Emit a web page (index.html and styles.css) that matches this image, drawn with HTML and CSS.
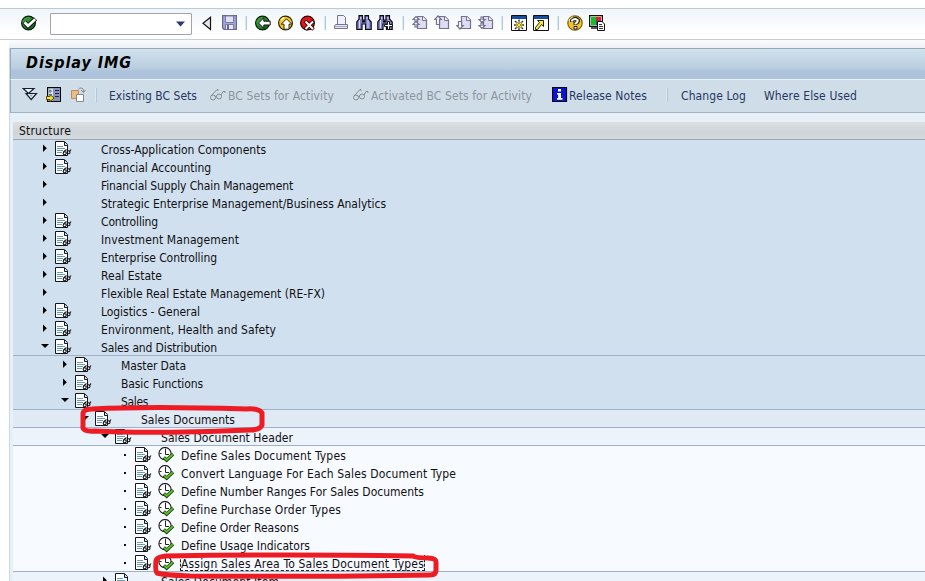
FILE: index.html
```html
<!DOCTYPE html>
<html lang="en">
<head>
<meta charset="utf-8">
<title>Display IMG</title>
<link rel="stylesheet" href="styles.css">
</head>
<body>
<svg class="defs" aria-hidden="true">
  <defs>
    <linearGradient id="gg" x2="1" y2="1"><stop offset="0" stop-color="#49b34a"/><stop offset="1" stop-color="#075b0b"/></linearGradient>
    <g id="glass" fill="none" stroke="#111" stroke-width="1.1"><circle cx="9.7" cy="12.2" r="1.5"/><circle cx="13.5" cy="11.2" r="1.5"/><path d="M8.5 11L11.5 8.5M14.5 10.5L16 8.5"/></g>
    <symbol id="doc" viewBox="0 0 17 16"><path d="M.5.5H9.5L12.5 3.5V14.5H.5Z" fill="#fff" stroke="#101820"/><path d="M9.5 1V4.5H12.5" fill="#cde" stroke="#101820"/><path d="M2 5.5H8M2 7.5H10M2 9.5H8M2 11.5H7" stroke="#6a9cb8"/><path d="M8 12H12" stroke="#fff" stroke-width="3"/><use href="#glass"/></symbol>
    <symbol id="clock" viewBox="0 0 17 16"><circle cx="7" cy="6.6" r="6.1" fill="#fff" stroke="#15151c" stroke-width="1.1"/><path d="M7.5 1.5V7.5H11M1.5 6.5H3.5" fill="none" stroke="#222"/><path d="M5.8 10.5L8.7 13.2L15 7" fill="none" stroke="#15350c" stroke-width="3.4"/><path d="M6.2 10.7L8.7 13L14.7 7.3" fill="none" stroke="#58bd29" stroke-width="2"/></symbol>
    <symbol id="spec" viewBox="0 0 17 14"><g fill="none" stroke="#858b91"><circle cx="4" cy="9.5" r="2.5"/><circle cx="10" cy="8.5" r="2.5"/><path d="M2 8L8 1.5H9V3M12 7L14 3.5H16V5M6 9L8 8"/></g></symbol>
    <symbol id="pg" viewBox="0 0 16 16"><path d="M5.5 1.5H11L14.5 5V13.5H5.5Z" fill="#dcdcf3" stroke="#72728e" stroke-width="1.2"/><path d="M10.5 1.5V5.5H14.5" fill="#fff" stroke="#72728e"/></symbol>
    <symbol id="bino" viewBox="0 0 16 16"><path d="M3 .7H6.5V5H9V.7H12.5V4L15.2 7V14.5H9.5V9H6V14.5H.8V7L3 4Z" fill="#8585c5" stroke="#0a0a1b" stroke-width="1.2"/><path d="M3.5 5V13M12 5V13M4.7 2V4M11 2V4" stroke="#d9d9f6"/><path d="M6 6.5H9.5" stroke="#0a0a1b" stroke-width="2"/></symbol>
    <symbol id="open" viewBox="0 0 12 12"><path d="M0 3H8L4 7Z" fill="#000"/></symbol>
    <symbol id="closed" viewBox="0 0 12 12"><path d="M2 1.5V9L5.8 5.2Z" fill="#000"/></symbol>
    <symbol id="dot" viewBox="0 0 12 12"><rect x="3" y="5" width="2" height="2" fill="#111"/></symbol>
  </defs>
</svg>

<header class="system">
  <svg class="ic" viewBox="0 0 16 16"><circle cx="7.5" cy="8" r="6.9" fill="url(#gg)" stroke="#081908" stroke-width="1.2"/><path d="M3.2 7L7 11L14.5 3.8" fill="none" stroke="#111" stroke-width="4.6"/><path d="M3.5 7.2L7 10.8L14.2 4.2" fill="none" stroke="#fff" stroke-width="2.7"/></svg>
  <div class="combo"><svg viewBox="0 0 9 6"><path d="M0 .5H9L4.5 5.5Z" fill="#2c3b69"/></svg></div>
  <svg class="ic" viewBox="0 0 16 16"><path d="M10.5 2.3V14.5L3 8.3Z" fill="#e4e6e8" stroke="#111" stroke-width="1.2"/></svg>
  <svg class="ic" viewBox="0 0 16 16"><path d="M.6.6H14.4V14.4H2L.6 13Z" fill="#a5a5d6" stroke="#686891" stroke-width="1.2"/><path d="M3.5 1H11.5V7.5H3.5Z" fill="#e0e0f4" stroke="#7a7aa5"/><path d="M3.5 14V9.5H11.5V14" fill="#e8e8fa" stroke="#7a7aa5"/><path d="M6 10V14" stroke="#686891" stroke-width="2"/></svg>
  <i class="sep"></i>
  <svg class="ic" viewBox="0 0 16 16"><circle cx="7.5" cy="8" r="6.9" fill="url(#gg)" stroke="#081908" stroke-width="1.2"/><path d="M3.5 8L8.8 2.8V6.2H15.2V10H8.8V13.3Z" fill="#fff" stroke="#111" stroke-width="1"/></svg>
  <svg class="ic" viewBox="0 0 16 16"><circle cx="7.5" cy="8" r="6.9" fill="#f5c51d" stroke="#2a230a" stroke-width="1.2"/><path d="M3 5L6 2.5" stroke="#fff3a0" stroke-width="2"/><path d="M8.5 3.8L13.8 9.2H11V14.2H6V9.2H3.2Z" fill="#fff" stroke="#30280b" stroke-width="1"/></svg>
  <svg class="ic" viewBox="0 0 16 16"><circle cx="7.5" cy="8" r="6.9" fill="#df1519" stroke="#2b0909" stroke-width="1.2"/><path d="M5 6L13.5 14.5M13.5 6L5 14.5" stroke="#29090a" stroke-width="3.6"/><path d="M5.5 6.5L13 14M13 6.5L5.5 14" stroke="#fff" stroke-width="2"/></svg>
  <i class="sep"></i>
  <svg class="ic" viewBox="0 0 16 16"><path d="M3.5 9.5V.5H9.5L11.5 2.5V9.5" fill="#f0f0fb" stroke="#75758d"/><path d="M1.5 9.5H13.5V13.5H.5V11Z" fill="#e5e5f5" stroke="#75758d"/><path d="M1 11.5H13" stroke="#a8a8c0"/></svg>
  <svg class="ic"><use href="#bino"/></svg>
  <svg class="ic" viewBox="0 0 16 16"><use href="#bino" width="16" height="16"/><path d="M10.5 6.5H12.5V9.5H15.5V11.5H12.5V14.5H10.5V11.5H7.5V9.5H10.5Z" fill="#fff" stroke="#111"/></svg>
  <i class="sep"></i>
  <svg class="ic" viewBox="0 0 16 16"><use href="#pg" width="16" height="16"/><path d="M1 4.5L4 1.5L7 4.5H5V7H3V4.5ZM1 9.5L4 6.5L7 9.5H5V12H3V9.5Z" fill="#fff" stroke="#72728e" stroke-width="1.2"/></svg>
  <svg class="ic" viewBox="0 0 16 16"><use href="#pg" width="16" height="16"/><path d="M.8 4.5L4 1L7.2 4.5H5.5V9.5H2.5V4.5Z" fill="#fff" stroke="#72728e" stroke-width="1.2"/></svg>
  <svg class="ic" viewBox="0 0 16 16"><use href="#pg" width="16" height="16"/><path d="M.8 10.5L4 14L7.2 10.5H5.5V6.5H2.5V10.5Z" fill="#fff" stroke="#72728e" stroke-width="1.2"/></svg>
  <svg class="ic" viewBox="0 0 16 16"><use href="#pg" width="16" height="16"/><path d="M1 4.5L4 7.5L7 4.5H5V2H3V4.5ZM1 10.5L4 13.5L7 10.5H5V8H3V10.5Z" fill="#fff" stroke="#72728e" stroke-width="1.2"/></svg>
  <i class="sep"></i>
  <svg class="ic" viewBox="0 0 16 16"><path d="M.5.5H15.5V15.5H.5Z" fill="#fff" stroke="#101010"/><path d="M1 1H15V4H1Z" fill="#174e9d"/><path d="M8 4.5V15M3 10H13M4 6L12 14M12 6L4 14" stroke="#333" stroke-width="1.4"/><path d="M8 6.5V13.5M4.5 10H11.5M5.5 7.5L10.5 12.5M10.5 7.5L5.5 12.5" stroke="#ffe92e"/></svg>
  <svg class="ic" viewBox="0 0 16 16"><path d="M.5.5H15.5V15.5H.5Z" fill="#fff" stroke="#101010"/><path d="M1 1H15V4H1Z" fill="#174e9d"/><path d="M4.5 5.5H10.5V11.5L8.5 9.5L4.5 14.5H2.5V12.5L6.5 7.5Z" fill="#ffe92e" stroke="#222"/></svg>
  <i class="sep"></i>
  <svg class="ic" viewBox="0 0 16 16"><circle cx="8" cy="8" r="7.2" fill="#f4c51c" stroke="#775d16" stroke-width="1.2"/><path d="M2 6L6 2" stroke="#fff59d" stroke-width="2"/><path d="M5 7V5.5Q8 2 11 5.3Q11 7.3 8.5 8.5V10" fill="none" stroke="#222" stroke-width="4"/><path d="M5 6.5V5.5Q8 2.5 10.8 5.5Q10.8 7.2 8.5 8.5V9.5" fill="none" stroke="#fff" stroke-width="2"/><path d="M7 11.5H10V14H7Z" fill="#fff" stroke="#222"/></svg>
  <svg class="ic" viewBox="0 0 16 16"><path d="M.6.6H13.4V11.4H.6Z" fill="#e7e7e7" stroke="#101010" stroke-width="1.2"/><path d="M2 2H7V10H2Z" fill="#18bc29"/><path d="M7 2H12V6H7Z" fill="#df202a"/><path d="M7 6H12V10H7Z" fill="#2544c9"/><path d="M2 13H9" stroke="#222" stroke-width="1.5"/><path d="M8.5 6.5H13L15.5 9V15.5H8.5Z" fill="#fff" stroke="#101010"/><path d="M10 9.5H13M10 11.5H14M10 13.5H14" stroke="#333"/></svg>
</header>
<div class="strip"></div>

<main class="window">
  <h1><span data-w="106">Display IMG</span></h1>
  <nav class="app">
    <svg class="ic" viewBox="0 0 16 16"><path d="M1.2 1.5H12L6.5 6.5ZM4 6.5H14.5L9.2 12.5Z" fill="#eef5fd" stroke="#14202c" stroke-width="1.2"/><path d="M7 7.5H11L9.5 10Z" fill="#8facce"/></svg>
    <svg class="ic" viewBox="0 0 16 16"><path d="M1.6.6H14.4V14.4H1.6Z" fill="#d5e2ef" stroke="#080808" stroke-width="1.2"/><path d="M7 1H14V14H7Z" fill="#8a91bc"/><path d="M9 3.5H13M9 6.5H13M9 9.5H13" stroke="#20263d"/><path d="M3 4H6M4 2.5V6M3 7.5H6" stroke="#566f86"/><path d="M.5 9.5H4V7.5L8 11L4 14.5V12.5H.5Z" fill="#ffe82b" stroke="#4f4808"/></svg>
    <svg class="ic" viewBox="0 0 16 16"><path d="M1.5 3.5H8.5V11.5H1.5Z" fill="#eebd82" stroke="#b48f63"/><path d="M6.5 7.5H13.5V14.5H6.5Z" fill="#fff" stroke="#858b91"/><path d="M8.5 2.5Q9 .5 12 1Q14 2 13.5 5M11 3L13.5 5.5L15.5 3" fill="none" stroke="#858b91"/></svg>
    <i class="sep"></i>
    <span data-w="88">Existing BC Sets</span>
    <svg class="ic glasses"><use href="#spec"/></svg>
    <span class="off" data-w="106">BC Sets for Activity</span>
    <svg class="ic glasses"><use href="#spec"/></svg>
    <span class="off" data-w="161">Activated BC Sets for Activity</span>
    <svg class="ic" viewBox="0 0 16 16"><path d="M.5.5H14.5V14.5H.5Z" fill="#0b16cf" stroke="#080818" stroke-width="1.2"/><path d="M6 2H9V4.5H6ZM5 6H9V11H10.5V12.7H5V11H6.2V7.5H5Z" fill="#fff"/></svg>
    <span data-w="78">Release Notes</span>
    <i class="sep"></i>
    <span data-w="65">Change Log</span>
    <span data-w="93">Where Else Used</span>
  </nav>
  <section class="tree">
    <h2><span data-w="52">Structure</span></h2>
    <ul id="rows"></ul>
  </section>
</main>

<svg class="marks" viewBox="0 0 925 581" aria-hidden="true">
  <path d="M92 409Q150 406 246 409Q259 408 262 413V425Q260 430 250 430Q150 434 95 431Q82 432 83 426V413Q84 409 92 409Z"/>
  <path d="M166 556Q280 554 413 556Q416 558 428 558Q436 558 436 562V570Q436 575 430 575Q330 577 190 576Q164 575 157 573Q155 572 156 561Q156 557 166 556Z"/>
</svg>
<script src="tree.js"></script>
</body>
</html>
```
FILE: styles.css
```css
* { box-sizing: border-box; }
html, body { height: 100%; }
body {
  margin: 0;
  overflow: hidden;
  background: #fff;
  color: #101014;
  font: 12px/18px "DejaVu Sans Condensed", "Noto Sans", sans-serif;
  padding-top: 8px;
  display: flex;
  flex-direction: column;
}
.defs { position: absolute; width: 0; height: 0; }
.ic { width: 16px; height: 16px; display: block; }
.sep { width: 2px; height: 14px; background: #b0c8de; border-left: 1px solid #dce8f2; }
[data-w] { white-space: nowrap; display: inline-block; }

.system {
  flex: none;
  height: 32px;
  padding-left: 21px;
  border-top: 1px solid #bdc8d3;
  border-bottom: 1px solid #c9cdd3;
  background: linear-gradient(#eff5fa, #fff 75%);
  display: grid;
  grid-template-columns: 29px 150px 22px 23px 10px 23px 22px 24px 10px 22px 21px 25px 10px 22px 22px 22px 23px 10px 22px 24px 10px 22px 16px;
  align-items: center;
  padding-bottom: 2px;
}
.combo {
  width: 142px;
  height: 22px;
  margin-top: 1px;
  border: 1px solid #a0a3aa;
  border-radius: 1px;
  background: #fff;
  display: flex;
  align-items: center;
  justify-content: flex-end;
  padding-right: 6px;
}
.combo svg { width: 9px; height: 6px; }
.strip {
  flex: none;
  height: 8px;
  margin-left: 9px;
  background: linear-gradient(#fbfcfd, #edf1f5);
}
.window {
  flex: none;
  height: 533px;
  margin-left: 9px;
  border-left: 1px solid #ccd7e6;
  background: #e8f0f7;
}
h1 {
  margin: 0;
  height: 32px;
  padding: 0 0 2px 15px;
  border-top: 1px solid #93a8bb;
  border-bottom: 1px solid #e8f1f8;
  border-left: 1px solid #94aac1;
  background: linear-gradient(#d1e1ee, #bbcfdf 60%, #adc3dc 75%, #adc3dc);
  color: #000;
  font: italic bold 16px/28px "DejaVu Sans Condensed", sans-serif;
}
.app {
  height: 33px;
  padding: 0 0 2px 11px;
  border-left: 1px solid #94aac1;
  border-bottom: 1px solid #9fb3c8;
  background: #cfdde8;
  color: #263762;
  display: grid;
  grid-template-columns: 24px 24px 25px 14px 101px 18px 125px 18px 181px 17px 97px 15px 83px 93px;
  align-items: center;
  justify-items: start;
}
.app span { padding-top: 1px; }
.app .off { color: #8d949c; }
.app .sep { height: 14px; }
.app .glasses { height: 14px; width: 17px; margin-left: -1px; }
.tree { margin: 9px 0 0 3px; }
h2 {
  margin: 0;
  height: 18px;
  padding-left: 6px;
  border-bottom: 1px solid #98a8b8;
  background: linear-gradient(#dce0e3, #ced4d8 60%, #d6dade);
  font-size: 12px;
  font-weight: normal;
  line-height: 18px;
}
ul { margin: 0; padding: 0; list-style: none; }
.row {
  height: 18px;
  display: flex;
  align-items: center;
  background: #d1e0ee;
  border-bottom: 1px solid transparent;
}
.row.line { border-bottom-color: #9db2ca; }
.row.tone2 { background: #e0eaf4; }
.row.tone3 { background: #ecf3fa; }
.row.tone4 { background: #f7faff; }
.l0 { padding-left: 28px; }
.l1 { padding-left: 48px; }
.l2 { padding-left: 68px; }
.l3 { padding-left: 88px; }
.l4 { padding-left: 108px; }
.toggle { width: 12px; height: 12px; margin-right: 2px; }
.slot { width: 46px; height: 16px; display: flex; gap: 6px; }
.slot svg { width: 17px; height: 16px; }
.label { line-height: 21px; height: 17px; }
.focus .label { border: 1px dashed #222; border-top: 0; margin-left: -1px; height: 16px; line-height: 19px; }
.marks {
  position: absolute;
  left: 0;
  top: 0;
  width: 925px;
  height: 581px;
  fill: none;
  stroke: #ed1c24;
  stroke-width: 5;
  pointer-events: none;
}
```
FILE: tree.js
```js
// level, toggle, icon count, label, label width, extra classes
const rows = [
  [0, 'closed', 1, 'Cross-Application Components', 165, ''],
  [0, 'closed', 1, 'Financial Accounting', 110, ''],
  [0, 'closed', 0, 'Financial Supply Chain Management', 192, ''],
  [0, 'closed', 0, 'Strategic Enterprise Management/Business Analytics', 285, ''],
  [0, 'closed', 1, 'Controlling', 57, ''],
  [0, 'closed', 1, 'Investment Management', 138, ''],
  [0, 'closed', 1, 'Enterprise Controlling', 116, ''],
  [0, 'closed', 1, 'Real Estate', 61, ''],
  [0, 'closed', 0, 'Flexible Real Estate Management (RE-FX)', 224, ''],
  [0, 'closed', 1, 'Logistics - General', 99, ''],
  [0, 'closed', 1, 'Environment, Health and Safety', 175, ''],
  [0, 'open', 1, 'Sales and Distribution', 116, 'line'],
  [1, 'closed', 1, 'Master Data', 65, ''],
  [1, 'closed', 1, 'Basic Functions', 82, ''],
  [1, 'open', 1, 'Sales', 27, 'line'],
  [2, 'open', 1, 'Sales Documents', 94, 'tone2 line'],
  [3, 'open', 1, 'Sales Document Header', 132, 'tone3 line'],
  [4, 'dot', 2, 'Define Sales Document Types', 165, 'tone4'],
  [4, 'dot', 2, 'Convert Language For Each Sales Document Type', 275, 'tone4'],
  [4, 'dot', 2, 'Define Number Ranges For Sales Documents', 243, 'tone4'],
  [4, 'dot', 2, 'Define Purchase Order Types', 160, 'tone4'],
  [4, 'dot', 2, 'Define Order Reasons', 118, 'tone4'],
  [4, 'dot', 2, 'Define Usage Indicators', 129, 'tone4'],
  [4, 'dot', 2, 'Assign Sales Area To Sales Document Types', 245, 'tone4 line focus'],
  [3, 'closed', 1, 'Sales Document Item', 118, 'tone3']
];
const icon = (id, cls) => `<svg class="${cls || ''}"><use href="#${id}"/></svg>`;
document.getElementById('rows').innerHTML = rows.map(([level, toggle, icons, text, width, extra]) =>
  `<li class="row l${level} ${extra}">${icon(toggle, 'toggle')}<span class="slot">${icons ? icon('doc') : ''}${icons > 1 ? icon('clock') : ''}</span><span class="label" data-w="${width}">${text}</span></li>`
).join('');

// Track each label so it fills its set width.
document.querySelectorAll('[data-w]').forEach(el => {
  const free = el.dataset.w - el.getBoundingClientRect().width;
  el.style.letterSpacing = free / el.textContent.length + 'px';
});
```
